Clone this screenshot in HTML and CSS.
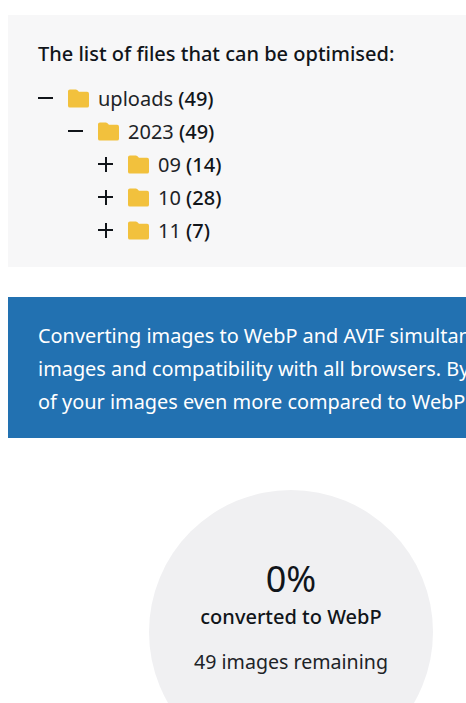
FILE: index.html
```html
<!DOCTYPE html>
<html>
<head>
    <meta charset="UTF-8">
    <link rel="stylesheet" href="styles.css">
</head>
<body>
    <div class="page">
        <div class="files-box">
            <h3 class="files-title">The list of files that can be optimised:</h3>
            <ul class="tree">
                <li class="tree-row">
                    <span class="toggle minus"></span>
                    <svg class="folder" viewBox="0 0 22 19"><path d="M2 0h6.2c.6 0 1 .2 1.4.6L11.500 2.500H20a2 2 0 0 1 2 2V17a2 2 0 0 1-2 2H2a2 2 0 0 1-2-2V2a2 2 0 0 1 2-2z"/></svg>
                    <span class="label">uploads <strong class="count">(49)</strong></span>
                </li>
                <li class="tree-row level-1">
                    <span class="toggle minus"></span>
                    <svg class="folder" viewBox="0 0 22 19"><path d="M2 0h6.2c.6 0 1 .2 1.4.6L11.500 2.500H20a2 2 0 0 1 2 2V17a2 2 0 0 1-2 2H2a2 2 0 0 1-2-2V2a2 2 0 0 1 2-2z"/></svg>
                    <span class="label">2023 <strong class="count">(49)</strong></span>
                </li>
                <li class="tree-row level-2">
                    <span class="toggle plus"></span>
                    <svg class="folder" viewBox="0 0 22 19"><path d="M2 0h6.2c.6 0 1 .2 1.4.6L11.500 2.500H20a2 2 0 0 1 2 2V17a2 2 0 0 1-2 2H2a2 2 0 0 1-2-2V2a2 2 0 0 1 2-2z"/></svg>
                    <span class="label">09 <strong class="count">(14)</strong></span>
                </li>
                <li class="tree-row level-2">
                    <span class="toggle plus"></span>
                    <svg class="folder" viewBox="0 0 22 19"><path d="M2 0h6.2c.6 0 1 .2 1.4.6L11.500 2.500H20a2 2 0 0 1 2 2V17a2 2 0 0 1-2 2H2a2 2 0 0 1-2-2V2a2 2 0 0 1 2-2z"/></svg>
                    <span class="label">10 <strong class="count">(28)</strong></span>
                </li>
                <li class="tree-row level-2">
                    <span class="toggle plus"></span>
                    <svg class="folder" viewBox="0 0 22 19"><path d="M2 0h6.2c.6 0 1 .2 1.4.6L11.500 2.500H20a2 2 0 0 1 2 2V17a2 2 0 0 1-2 2H2a2 2 0 0 1-2-2V2a2 2 0 0 1 2-2z"/></svg>
                    <span class="label">11 <strong class="count">(7)</strong></span>
                </li>
            </ul>
        </div>
        <div class="notice">
            Converting images to WebP and AVIF simultaneously guarantees<br>
            images and compatibility with all browsers. By using AVIF you reduce<br>
            of your images even more compared to WebP format.
        </div>
        <div class="progress">
            <div class="circle">
                <div class="percent">0%</div>
                <div class="converted">converted to WebP</div>
                <div class="remaining">49 images remaining</div>
            </div>
        </div>
    </div>
</body>
</html>
```

FILE: styles.css
```css
html, body {
    overflow: hidden;
}
body {
    background-color: #fff;
    color: #1d2327;
    font-family: "Noto Sans", "Open Sans", sans-serif;
    height: 703px;
    margin: 0;
    padding: 0;
}
.page {
    padding: 15px 0 0 8px;
    width: 566px;
}
.files-box {
    background-color: #f7f7f8;
    height: 252px;
    box-sizing: border-box;
    padding: 26px 30px 0;
}
.files-title {
    color: #11151a;
    font-size: 20px;
    font-weight: 500;
    line-height: 26px;
    margin: 0 0 15px;
}
.tree {
    list-style: none;
    margin: 0;
    padding: 0;
}
.tree-row {
    align-items: center;
    display: flex;
    font-size: 20px;
    height: 33px;
}
.level-1 {
    padding-left: 30px;
}
.level-2 {
    padding-left: 60px;
}
.toggle {
    display: block;
    height: 15px;
    margin-right: 15px;
    position: relative;
    width: 15px;
}
.toggle::before,
.plus::after {
    background-color: #11151a;
    content: "";
    position: absolute;
}
.toggle::before {
    height: 2px;
    left: 0;
    top: 6px;
    width: 15px;
}
.plus::after {
    height: 15px;
    left: 6.500px;
    top: 0;
    width: 2px;
}
.folder {
    fill: #f2c13d;
    height: 19px;
    margin-right: 9px;
    width: 21px;
}
.label {
    white-space: pre;
}
.count {
    color: #11151a;
    font-weight: 500;
}
.notice {
    background-color: #2271b1;
    color: #fff;
    font-size: 19.900px;
    height: 141px;
    box-sizing: border-box;
    line-height: 33px;
    margin-top: 30px;
    padding: 22px 30px 0;
    white-space: nowrap;
}
.progress {
    display: flex;
    justify-content: center;
    padding-top: 52px;
}
.circle {
    align-items: center;
    background-color: #f0f0f2;
    border-radius: 50%;
    box-sizing: border-box;
    display: flex;
    flex-direction: column;
    height: 284px;
    padding-top: 66px;
    width: 284px;
}
.percent {
    color: #11151a;
    font-size: 36px;
    line-height: 46px;
}
.converted {
    color: #11151a;
    font-size: 20px;
    font-weight: 500;
    line-height: 26px;
    margin-top: 2px;
}
.remaining {
    font-size: 19.600px;
    line-height: 26px;
    margin-top: 19px;
}
```
